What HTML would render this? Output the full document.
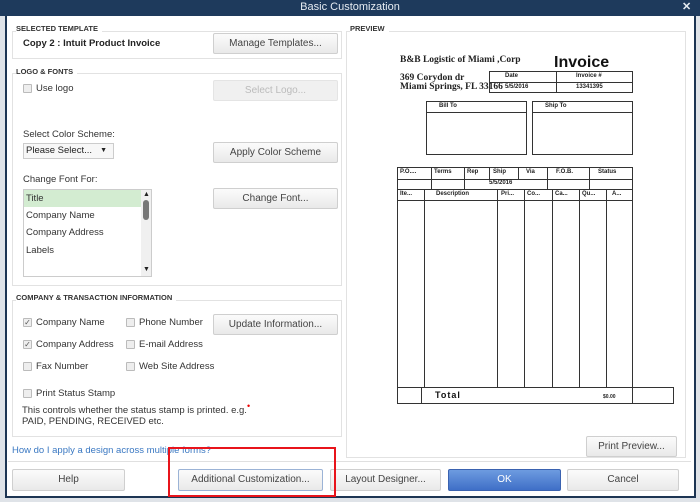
<!DOCTYPE html>
<html><head><style>
*{margin:0;padding:0;box-sizing:border-box}
body{width:700px;height:502px;position:relative;overflow:hidden;background:#dfe3e8;font-family:"Liberation Sans",Arial,sans-serif;font-size:10px;color:#222}
.a{position:absolute}
.dlg{position:absolute;left:5px;top:0;width:691px;height:498px;background:#fff;border:2px solid #1d3553;border-top:none}
.title{position:absolute;left:0;top:0;width:700px;height:16px;background:#1e3a5c;color:#e6ecf2;font-size:11px;text-align:center;line-height:15px}
.grp{position:absolute;border:1px solid #e2e2e2}
.lbl{position:absolute;font-size:7.5px;font-weight:bold;color:#333;background:#fff;padding-right:4px}
.btn{position:absolute;border:1px solid #cfcfcf;border-radius:2px;background:linear-gradient(#fbfbfb,#e9e9e9);font-size:10px;color:#444;text-align:center}
.cb{position:absolute;width:9px;height:9px;border:1px solid #bbb;background:#eee;border-radius:1px;font-size:8px;line-height:7px;text-align:center;color:#555}
.t{position:absolute;font-size:9.5px;color:#333;white-space:nowrap}
.ln{position:absolute;background:#333}
.inv{position:absolute;font-size:6px;font-weight:bold;color:#222;white-space:nowrap}
</style></head><body>
<div class="dlg"></div>
<div class="title">Basic Customization<span class="a" style="left:682px;top:0;font-weight:bold">✕</span></div>

<div class="grp" style="left:12px;top:31px;width:330px;height:28px"></div>
<div class="lbl" style="left:16px;top:24px">SELECTED TEMPLATE</div>
<div class="t" style="left:23px;top:38px;font-weight:bold;color:#222">Copy 2 : Intuit Product Invoice</div>
<div class="btn" style="left:213px;top:33px;width:125px;height:21px;line-height:19px">Manage Templates...</div>

<div class="grp" style="left:12px;top:73px;width:330px;height:213px"></div>
<div class="lbl" style="left:16px;top:67px">LOGO &amp; FONTS</div>
<div class="cb" style="left:23px;top:84px"></div><div class="t" style="left:36px;top:83px">Use logo</div>
<div class="btn" style="left:213px;top:80px;width:125px;height:21px;line-height:19px;color:#bbb;background:#f0f0f0;border-color:#e4e4e4">Select Logo...</div>
<div class="t" style="left:23px;top:129px">Select Color Scheme:</div>
<div class="a" style="left:23px;top:143px;width:91px;height:16px;border:1px solid #ccc;background:#f7f7f7;font-size:9.5px;line-height:14px;padding-left:2px">Please Select... <span style="position:absolute;right:6px;font-size:7px">▼</span></div>
<div class="btn" style="left:213px;top:142px;width:125px;height:21px;line-height:19px">Apply Color Scheme</div>
<div class="t" style="left:23px;top:174px">Change Font For:</div>
<div class="a" style="left:23px;top:189px;width:129px;height:88px;border:1px solid #ccc"></div>
<div class="a" style="left:24px;top:190px;width:117px;height:17px;background:#d3ecd1"></div>
<div class="t" style="left:26px;top:193px">Title</div>
<div class="t" style="left:26px;top:210px">Company Name</div>
<div class="t" style="left:26px;top:227px">Company Address</div>
<div class="t" style="left:26px;top:245px">Labels</div>
<div class="a" style="left:141px;top:190px;width:10px;height:86px;background:#f0f0f0"></div>
<div class="a" style="left:143px;top:191px;font-size:7px">▲</div>
<div class="a" style="left:143px;top:266px;font-size:7px">▼</div>
<div class="a" style="left:143px;top:200px;width:6px;height:20px;background:#777;border-radius:3px"></div>
<div class="btn" style="left:213px;top:188px;width:125px;height:21px;line-height:19px">Change Font...</div>

<div class="grp" style="left:12px;top:300px;width:330px;height:137px"></div>
<div class="lbl" style="left:16px;top:293px">COMPANY &amp; TRANSACTION INFORMATION</div>
<div class="cb" style="left:23px;top:318px">✓</div><div class="t" style="left:36px;top:317px">Company Name</div>
<div class="cb" style="left:126px;top:318px"></div><div class="t" style="left:139px;top:317px">Phone Number</div>
<div class="btn" style="left:213px;top:314px;width:125px;height:21px;line-height:19px">Update Information...</div>
<div class="cb" style="left:23px;top:340px">✓</div><div class="t" style="left:36px;top:339px">Company Address</div>
<div class="cb" style="left:126px;top:340px"></div><div class="t" style="left:139px;top:339px">E-mail Address</div>
<div class="cb" style="left:23px;top:362px"></div><div class="t" style="left:36px;top:361px">Fax Number</div>
<div class="cb" style="left:126px;top:362px"></div><div class="t" style="left:139px;top:361px">Web Site Address</div>
<div class="cb" style="left:23px;top:389px"></div><div class="t" style="left:36px;top:388px">Print Status Stamp</div>
<div class="t" style="left:22px;top:405px">This controls whether the status stamp is printed. e.g.<span style="color:#e00;position:relative;top:-4px;font-size:9px">•</span></div>
<div class="t" style="left:22px;top:416px">PAID, PENDING, RECEIVED etc.</div>
<div class="t" style="left:12px;top:445px;color:#3a78c2">How do I apply a design across multiple forms?</div>
<div class="a" style="left:8px;top:461px;width:683px;height:1px;background:#e0e0e0"></div>

<div class="grp" style="left:346px;top:31px;width:340px;height:427px"></div>
<div class="lbl" style="left:350px;top:24px">PREVIEW</div>
<div class="btn" style="left:586px;top:436px;width:91px;height:21px;line-height:19px">Print Preview...</div>

<!-- invoice -->
<div class="a" style="left:400px;top:56px;font-family:'Liberation Serif',serif;font-weight:bold;font-size:9.5px;line-height:9px;color:#222">B&amp;B Logistic of Miami ,Corp<br><br style="line-height:2px">369 Corydon dr<br>Miami Springs, FL 33166</div>
<div class="a" style="left:554px;top:54px;font-weight:bold;font-size:16px;color:#111">Invoice</div>
<div class="a" style="left:489px;top:71px;width:144px;height:22px;border:1px solid #333;background:transparent"></div>
<div class="ln" style="left:556px;top:71px;width:1px;height:22px"></div>
<div class="ln" style="left:489px;top:82px;width:144px;height:1px"></div>
<div class="inv" style="left:505px;top:73px">Date</div><div class="inv" style="left:576px;top:73px">Invoice #</div>
<div class="inv" style="left:505px;top:84px">5/5/2016</div><div class="inv" style="left:576px;top:84px">13341395</div>
<div class="a" style="left:426px;top:101px;width:101px;height:54px;border:1px solid #333"></div>
<div class="ln" style="left:426px;top:112px;width:101px;height:1px"></div>
<div class="inv" style="left:439px;top:103px">Bill To</div>
<div class="a" style="left:532px;top:101px;width:101px;height:54px;border:1px solid #333"></div>
<div class="ln" style="left:532px;top:112px;width:101px;height:1px"></div>
<div class="inv" style="left:545px;top:103px">Ship To</div>

<div class="a" style="left:397px;top:167px;width:236px;height:221px;border:1px solid #333"></div>
<div class="ln" style="left:397px;top:179px;width:236px;height:1px"></div>
<div class="ln" style="left:397px;top:189px;width:236px;height:1px"></div>
<div class="ln" style="left:397px;top:200px;width:236px;height:1px"></div>
<div class="ln" style="left:431px;top:167px;width:1px;height:22px"></div>
<div class="ln" style="left:464px;top:167px;width:1px;height:22px"></div>
<div class="ln" style="left:489px;top:167px;width:1px;height:12px"></div>
<div class="ln" style="left:518px;top:167px;width:1px;height:12px"></div>
<div class="ln" style="left:547px;top:167px;width:1px;height:22px"></div>
<div class="ln" style="left:589px;top:167px;width:1px;height:22px"></div>
<div class="inv" style="left:400px;top:169px">P.O....</div><div class="inv" style="left:434px;top:169px">Terms</div>
<div class="inv" style="left:467px;top:169px">Rep</div><div class="inv" style="left:493px;top:169px">Ship</div>
<div class="inv" style="left:526px;top:169px">Via</div><div class="inv" style="left:556px;top:169px">F.O.B.</div>
<div class="inv" style="left:598px;top:169px">Status</div>
<div class="inv" style="left:489px;top:180px">5/5/2016</div>
<div class="ln" style="left:424px;top:189px;width:1px;height:199px"></div>
<div class="ln" style="left:497px;top:189px;width:1px;height:199px"></div>
<div class="ln" style="left:524px;top:189px;width:1px;height:199px"></div>
<div class="ln" style="left:552px;top:189px;width:1px;height:199px"></div>
<div class="ln" style="left:579px;top:189px;width:1px;height:199px"></div>
<div class="ln" style="left:606px;top:189px;width:1px;height:199px"></div>
<div class="inv" style="left:400px;top:191px">Ite...</div><div class="inv" style="left:436px;top:191px">Description</div>
<div class="inv" style="left:501px;top:191px">Pri...</div><div class="inv" style="left:527px;top:191px">Co...</div>
<div class="inv" style="left:555px;top:191px">Ca...</div><div class="inv" style="left:582px;top:191px">Qu...</div>
<div class="inv" style="left:612px;top:191px">A...</div>
<div class="a" style="left:397px;top:387px;width:277px;height:17px;border:1px solid #333"></div>
<div class="ln" style="left:421px;top:387px;width:1px;height:17px"></div>
<div class="ln" style="left:632px;top:387px;width:1px;height:17px"></div>
<div class="a" style="left:435px;top:390px;font-weight:bold;font-size:9px;letter-spacing:1px;color:#111">Total</div>
<div class="inv" style="left:603px;top:394px;font-size:5px">$0.00</div>

<!-- bottom buttons -->
<div class="btn" style="left:12px;top:469px;width:113px;height:22px;line-height:20px">Help</div>
<div class="btn" style="left:178px;top:469px;width:145px;height:22px;line-height:20px;border-color:#9bb3d6">Additional Customization...</div>
<div class="btn" style="left:330px;top:469px;width:111px;height:22px;line-height:20px">Layout Designer...</div>
<div class="btn" style="left:448px;top:469px;width:113px;height:22px;line-height:20px;background:linear-gradient(#6d9be0,#3f6fc7);border-color:#3a62b0;color:#fff">OK</div>
<div class="btn" style="left:567px;top:469px;width:112px;height:22px;line-height:20px">Cancel</div>
<div class="a" style="left:168px;top:447px;width:168px;height:50px;border:2.5px solid #e8141b"></div>
</body></html>
